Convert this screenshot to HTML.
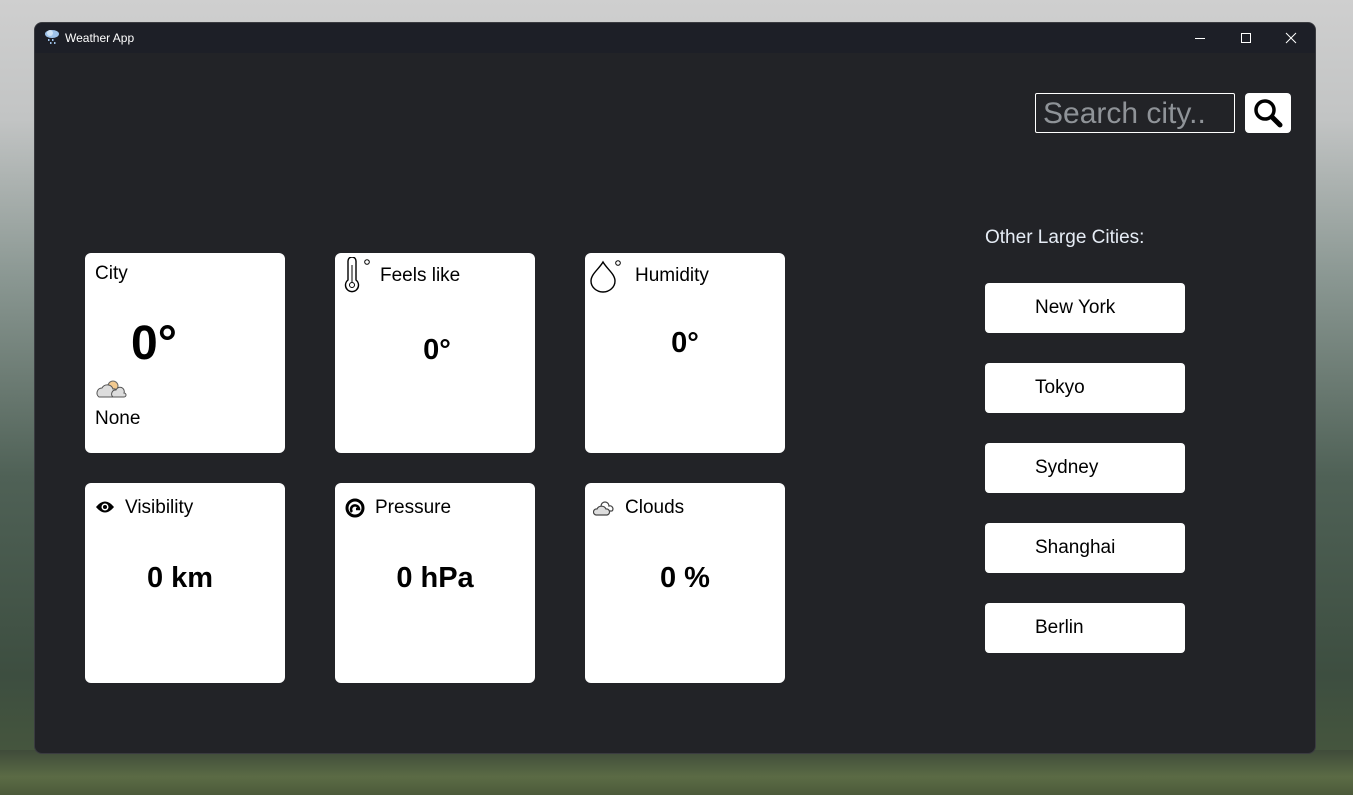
<!DOCTYPE html>
<html><head><meta charset="utf-8"><style>
*{margin:0;padding:0;box-sizing:border-box}
body{width:1353px;height:795px;overflow:hidden;position:relative;font-family:"Liberation Sans",Arial,sans-serif;
background:linear-gradient(180deg,#cfcfcf 0%,#c2c4c4 15%,#8a9792 35%,#4f6156 60%,#3d4e40 85%,#4a5a3c 100%)}
.bgb{position:absolute;left:0;top:750px;width:1353px;height:45px;background:linear-gradient(180deg,#3f4b3a,#5b6b45 60%,#4c5a3a)}
.win{position:absolute;left:35px;top:23px;width:1280px;height:730px;background:#222327;border-radius:7px;overflow:hidden;box-shadow:0 0 0 1px #3a3b40}
.tb{height:30px;background:#1d1f27;position:relative;color:#fff;font-size:12px}
.tb .t{position:absolute;left:30px;top:8px}
.card{position:absolute;width:200px;height:200px;background:#fff;border-radius:6px;color:#000}
.lbl{position:absolute;font-size:19px}
.val{position:absolute;font-weight:bold;width:100%;text-align:center}
.city{position:absolute;left:950px;width:200px;height:50px;background:#fff;border-radius:4px;font-size:19px;padding:14px 0 0 50px;color:#000}
</style></head><body>
<div class="bgb"></div>
<div class="win">
 <div class="tb">
  <svg style="position:absolute;left:8px;top:5px" width="18" height="18" viewBox="0 0 18 18"><ellipse cx="9" cy="6" rx="7" ry="4" fill="#9fc3ea"/><circle cx="7" cy="5" r="3" fill="#cfe3f7"/><rect x="5" y="11" width="1.5" height="2" fill="#9fc3ea"/><rect x="9" y="11" width="1.5" height="2" fill="#9fc3ea"/><rect x="7" y="14" width="1.5" height="2" fill="#9fc3ea"/><rect x="11" y="14" width="1.5" height="2" fill="#9fc3ea"/></svg>
  <span class="t">Weather App</span>
  <svg style="position:absolute;left:1160px;top:8px" width="110" height="14" viewBox="0 0 110 14" stroke="#fff" stroke-width="1" fill="none"><line x1="0" y1="7.5" x2="10" y2="7.5"/><rect x="46.5" y="2.5" width="9" height="9"/><path d="M91 2 L101 12 M101 2 L91 12"/></svg>
 </div>
 <div style="position:absolute;left:1000px;top:70px;width:200px;height:40px;border:1px solid #fff;border-radius:2px;background:#222327;color:#8f9398;font-size:30px;padding:3px 0 0 7px">Search city..</div>
 <div style="position:absolute;left:1210px;top:70px;width:46px;height:40px;background:#fff;border-radius:4px">
  <svg width="46" height="40" viewBox="0 0 46 40"><circle cx="20" cy="17" r="9" fill="none" stroke="#000" stroke-width="3.5"/><line x1="27" y1="24" x2="35" y2="32" stroke="#000" stroke-width="5" stroke-linecap="round"/></svg>
 </div>

 <div class="card" style="left:50px;top:230px">
  <div class="lbl" style="left:10px;top:10px">City</div>
  <div style="position:absolute;left:46px;top:63px;font-size:48px;font-weight:bold">0°</div>
  <svg style="position:absolute;left:10px;top:124px" width="32" height="22" viewBox="0 0 32 22"><circle cx="18" cy="9" r="5" fill="#f2c98f" stroke="#666"/><path d="M4 20 a5 5 0 0 1 3-9 a6 6 0 0 1 11 1 a4 4 0 0 1 2 8z" fill="#ddd" stroke="#555"/><path d="M18 20 a4 4 0 0 1 3-7 a4 4 0 0 1 8 3 a2 2 0 0 1 0 4z" fill="#ddd" stroke="#555"/></svg>
  <div class="lbl" style="left:10px;top:155px">None</div>
 </div>
 <div class="card" style="left:300px;top:230px">
  <svg style="position:absolute;left:8px;top:4px" width="30" height="36" viewBox="0 0 30 36"><path d="M5 4 a4 4 0 0 1 8 0 v19 a6.5 6.5 0 1 1 -8 0z" fill="none" stroke="#000" stroke-width="1.4"/><circle cx="9" cy="28" r="2.5" fill="none" stroke="#000"/><line x1="9" y1="8" x2="9" y2="25" stroke="#000"/><circle cx="24" cy="5" r="2.3" fill="none" stroke="#000"/></svg>
  <div class="lbl" style="left:45px;top:12px">Feels like</div>
  <div class="val" style="top:81px;font-size:29px;left:2px">0°</div>
 </div>
 <div class="card" style="left:550px;top:230px">
  <svg style="position:absolute;left:2px;top:4px" width="38" height="36" viewBox="0 0 38 36"><path d="M16 5 C12 12 4 17 4 24 a12 11 0 0 0 24 0 C28 17 20 12 16 5z" fill="none" stroke="#000" stroke-width="1.4"/><circle cx="31" cy="6" r="2.3" fill="none" stroke="#000"/></svg>
  <div class="lbl" style="left:50px;top:12px">Humidity</div>
  <div class="val" style="top:74px;font-size:29px">0°</div>
 </div>
 <div class="card" style="left:50px;top:460px">
  <svg style="position:absolute;left:10px;top:16px" width="20" height="16" viewBox="0 0 20 16"><path d="M1 8 Q10 -3 19 8 Q10 19 1 8z" fill="#000"/><circle cx="10" cy="8" r="3.5" fill="#fff"/><circle cx="10" cy="8" r="2" fill="#000"/></svg>
  <div class="lbl" style="left:40px;top:14px">Visibility</div>
  <div class="val" style="top:79px;font-size:29px;left:-5px">0 km</div>
 </div>
 <div class="card" style="left:300px;top:460px">
  <svg style="position:absolute;left:10px;top:15px" width="20" height="20" viewBox="0 0 20 20"><circle cx="10" cy="10" r="8" fill="none" stroke="#000" stroke-width="3"/><path d="M7 14 a4 4 0 1 1 7-3 l-3 0" fill="none" stroke="#000" stroke-width="2.5"/></svg>
  <div class="lbl" style="left:40px;top:14px">Pressure</div>
  <div class="val" style="top:79px;font-size:29px">0 hPa</div>
 </div>
 <div class="card" style="left:550px;top:460px">
  <svg style="position:absolute;left:8px;top:15px" width="24" height="20" viewBox="0 0 24 20"><path d="M8 8 a4 4 0 0 1 8 0 a3 3 0 0 1 3 5 h-3" fill="#fff" stroke="#444" stroke-width="1.2"/><path d="M3 17 a3 3 0 0 1 1-6 a5 5 0 0 1 9 0 a3 3 0 0 1 1 6z" fill="#ddd" stroke="#444" stroke-width="1.2"/></svg>
  <div class="lbl" style="left:40px;top:14px">Clouds</div>
  <div class="val" style="top:79px;font-size:29px">0 %</div>
 </div>

 <div style="position:absolute;left:950px;top:204px;color:#e6ecf5;font-size:19px">Other Large Cities:</div>
 <div class="city" style="top:260px">New York</div>
 <div class="city" style="top:340px">Tokyo</div>
 <div class="city" style="top:420px">Sydney</div>
 <div class="city" style="top:500px">Shanghai</div>
 <div class="city" style="top:580px">Berlin</div>
</div>
</body></html>
